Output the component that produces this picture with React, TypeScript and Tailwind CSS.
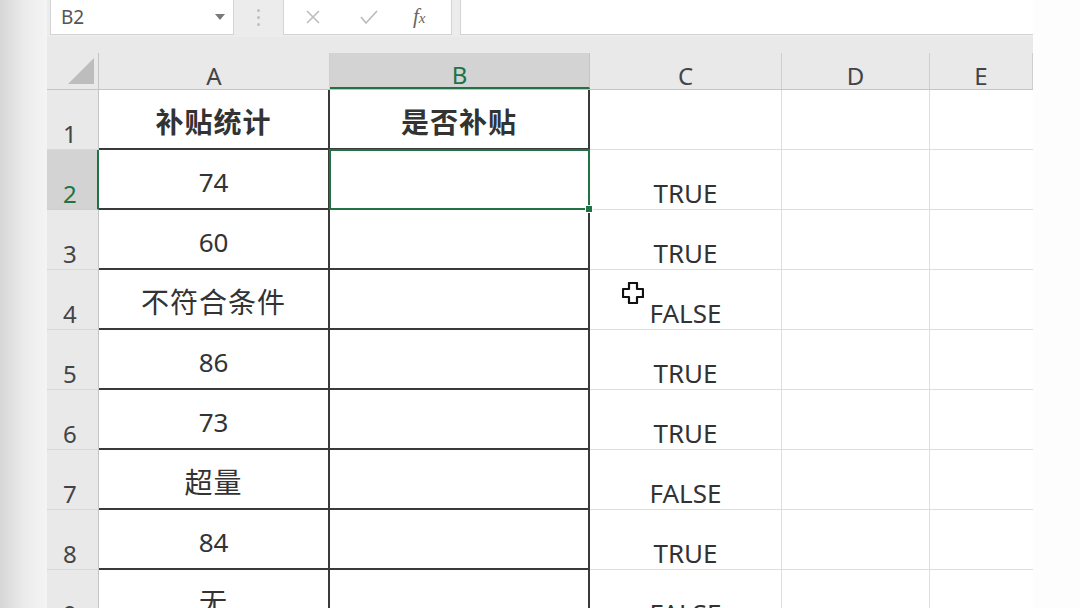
type Row = { n: number; a: string; b?: string; c: string; head?: boolean };

const rows: Row[] = [
  { n: 1, a: "补贴统计", b: "是否补贴", c: "", head: true },
  { n: 2, a: "74", c: "TRUE" },
  { n: 3, a: "60", c: "TRUE" },
  { n: 4, a: "不符合条件", c: "FALSE" },
  { n: 5, a: "86", c: "TRUE" },
  { n: 6, a: "73", c: "TRUE" },
  { n: 7, a: "超量", c: "FALSE" },
  { n: 8, a: "84", c: "TRUE" },
  { n: 9, a: "无", c: "FALSE" },
];

const selectedRow = 2;
const font = "font-['Noto_Sans','Noto_Sans_CJK_SC',sans-serif]";
const isCjk = (s: string) => /[\u4e00-\u9fff]/.test(s);

function FormulaBar() {
  return (
    <div className="flex h-[37px] shrink-0 items-stretch bg-[#ececec] pb-[2px]">
      <div className="ml-[3px] flex w-[184px] items-center justify-between border border-t-0 border-[#d4d4d4] bg-white pl-[10px] pr-[8px]">
        <span className="text-[19px] text-[#555]">B2</span>
        <svg width="10" height="6" viewBox="0 0 10 6">
          <path d="M0 0h10L5 6z" fill="#7a7a7a" />
        </svg>
      </div>
      <div className="flex w-[49px] flex-col items-center justify-center gap-[4px]">
        <span className="h-[3px] w-[3px] rounded-full bg-[#bdbdbd]" />
        <span className="h-[3px] w-[3px] rounded-full bg-[#bdbdbd]" />
        <span className="h-[3px] w-[3px] rounded-full bg-[#bdbdbd]" />
      </div>
      <div className="flex w-[169px] items-center border border-t-0 border-[#d4d4d4] bg-white">
        <svg className="ml-[21px]" width="16" height="16" viewBox="0 0 16 16">
          <path d="M2 2l12 12M14 2L2 14" stroke="#bdbdbd" strokeWidth="1.6" />
        </svg>
        <svg className="ml-[38px]" width="20" height="16" viewBox="0 0 20 16">
          <path d="M2 8l5 6L18 2" stroke="#bdbdbd" strokeWidth="1.8" fill="none" />
        </svg>
        <span className="ml-[34px] font-['Liberation_Serif',serif] text-[21px] italic text-[#666]">
          f<span className="text-[15px]">x</span>
        </span>
      </div>
      <div className="ml-[8px] flex-1 border border-t-0 border-r-0 border-[#d4d4d4] bg-white" />
    </div>
  );
}

function ColumnHeader() {
  const cols = [
    { l: "A", w: "w-[231px]" },
    { l: "B", w: "w-[260px]", sel: true },
    { l: "C", w: "w-[192px]" },
    { l: "D", w: "w-[148px]" },
    { l: "E", w: "w-[103px]" },
  ];
  return (
    <div className="shrink-0 bg-[#e9e9e9]">
      <div className="h-[16px]" />
      <div className="flex h-[37px] border-b border-[#c4c4c4]">
        <div className="flex w-[52px] items-end justify-end border-r border-[#c4c4c4] pb-[5px] pr-[4px]">
          <svg width="26" height="26" viewBox="0 0 26 26">
            <path d="M26 0V26H0z" fill="#bdbdbd" />
          </svg>
        </div>
        {cols.map((c) => (
          <div
            key={c.l}
            className={`${c.w} flex items-center justify-center pt-[9px] text-[24px] ${
              c.sel
                ? "border-b-2 border-r border-[#217346] border-r-[#c4c4c4] bg-[#d3d3d3] text-[#217346]"
                : "border-r border-[#cfcfcf] text-[#444]"
            }`}
          >
            {c.l}
          </div>
        ))}
      </div>
    </div>
  );
}

// move/select cursor hovering over column C
function Cursor() {
  return (
    <svg className="absolute left-[32px] top-[12px]" width="22" height="22" viewBox="0 0 22 22">
      <path
        d="M7 1h8v6h6v8h-6v6H7v-6H1V7h6z"
        fill="white"
        stroke="#111"
        strokeWidth="2.2"
        strokeLinejoin="round"
      />
    </svg>
  );
}

function SheetRow({ r }: { r: Row }) {
  const sel = r.n === selectedRow;
  const cellText = (s: string) =>
    isCjk(s) ? "text-[28px] tracking-[1px]" : "text-[26px]";
  return (
    <div className="flex h-[60px] shrink-0">
      <div
        className={`flex w-[52px] items-end pb-[3px] pl-[16px] text-[24px] leading-[24px] ${
          sel
            ? "border-r-2 border-b border-[#217346] border-b-[#cfcfcf] bg-[#d3d3d3] text-[#217346]"
            : "border-r border-b border-[#c4c4c4] border-b-[#d8d8d8] bg-[#e9e9e9] text-[#444]"
        }`}
      >
        {r.n}
      </div>
      <div
        className={`flex w-[231px] items-center justify-center border-b-2 border-r-2 border-[#3a3a3a] pt-[6px] text-[#333] ${cellText(
          r.a
        )} ${r.head ? "font-bold" : ""}`}
      >
        {r.a}
      </div>
      <div
        className={`relative flex w-[260px] items-center justify-center border-b-2 border-r-2 border-[#3a3a3a] pt-[6px] text-[#333] ${
          r.head ? "font-bold text-[28px] tracking-[1px]" : ""
        }`}
      >
        {r.b}
        {sel && (
          <div className="absolute -bottom-[2px] -left-[1px] -right-[2px] -top-[1px] z-10 border-2 border-[#217346]">
            <div className="absolute -bottom-[5px] -right-[5px] h-[8px] w-[8px] border border-white bg-[#217346]" />
          </div>
        )}
      </div>
      <div className="relative flex w-[192px] items-end justify-center border-b border-r border-[#dedede] pb-[4px] text-[26px] leading-[24px] text-[#333]">
        {r.c}
        {r.n === 4 && <Cursor />}
      </div>
      <div className="w-[148px] border-b border-r border-[#dedede]" />
      <div className="w-[103px] border-b border-[#dedede]" />
    </div>
  );
}

export default function App() {
  return (
    <div className={`${font} flex h-[608px] w-[1080px] overflow-hidden bg-white`}>
      <div className="w-[47px] shrink-0 bg-gradient-to-r from-[#d6d6d6] via-[#ebebeb] to-[#f4f4f4]" />
      <div className="flex w-[986px] shrink-0 flex-col">
        <FormulaBar />
        <ColumnHeader />
        {rows.map((r) => (
          <SheetRow key={r.n} r={r} />
        ))}
      </div>
      <div className="w-[47px] shrink-0 bg-[#fdfdfd]" />
    </div>
  );
}
